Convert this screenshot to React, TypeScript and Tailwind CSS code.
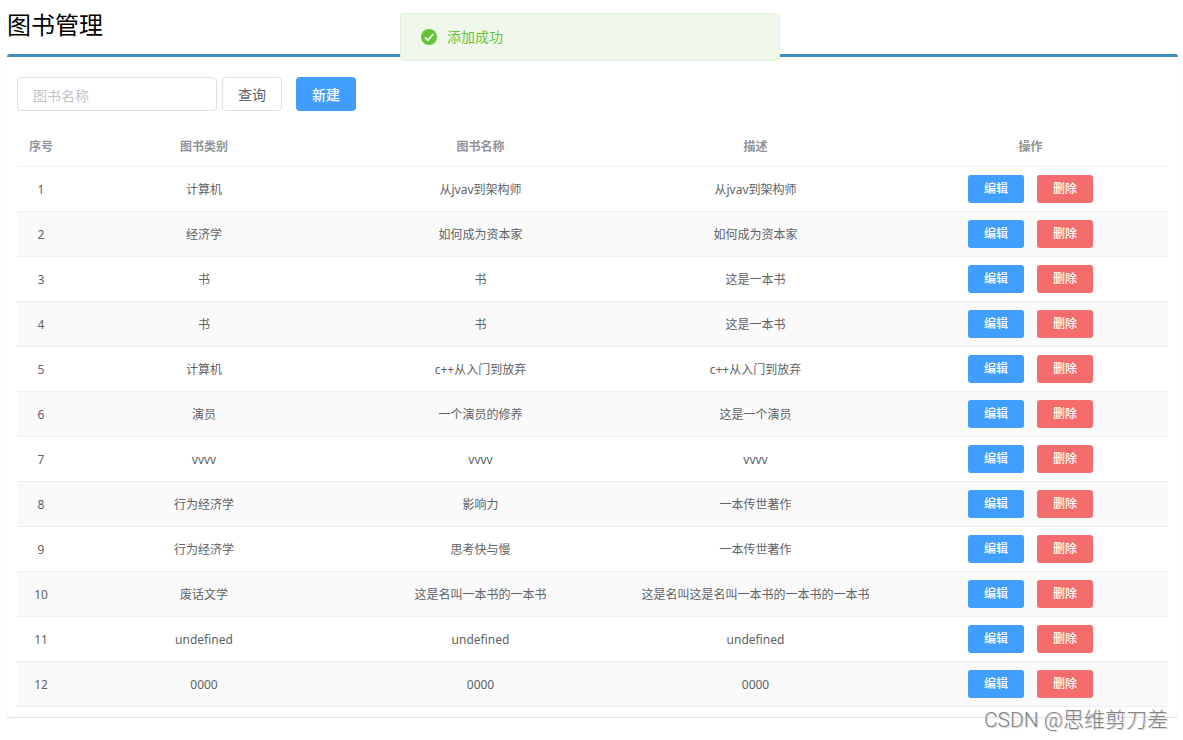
interface Book {
  category: string;
  name: string;
  description: string;
}

const books: Book[] = [
  { category: '计算机', name: '从jvav到架构师', description: '从jvav到架构师' },
  { category: '经济学', name: '如何成为资本家', description: '如何成为资本家' },
  { category: '书', name: '书', description: '这是一本书' },
  { category: '书', name: '书', description: '这是一本书' },
  { category: '计算机', name: 'c++从入门到放弃', description: 'c++从入门到放弃' },
  { category: '演员', name: '一个演员的修养', description: '这是一个演员' },
  { category: 'vvvv', name: 'vvvv', description: 'vvvv' },
  { category: '行为经济学', name: '影响力', description: '一本传世著作' },
  { category: '行为经济学', name: '思考快与慢', description: '一本传世著作' },
  { category: '废话文学', name: '这是名叫一本书的一本书', description: '这是名叫这是名叫一本书的一本书的一本书' },
  { category: 'undefined', name: 'undefined', description: 'undefined' },
  { category: '0000', name: '0000', description: '0000' },
];

function SuccessIcon() {
  return (
    <svg viewBox="0 0 16 16" className="size-4 shrink-0" aria-hidden="true">
      <circle cx="8" cy="8" r="8" fill="#67c23a" />
      <path d="M4 8.3 7 11.2 12.2 5" fill="none" stroke="#f0f9eb" strokeWidth="1.7" />
    </svg>
  );
}

function SuccessMessage({ text }: { text: string }) {
  return (
    <div className="pointer-events-none absolute inset-x-0 top-[13px] flex justify-center pr-[3px]">
      <div
        role="alert"
        className="flex h-12 w-[380px] items-center gap-2.5 rounded border border-[#e1f3d8] bg-[#f0f8ec] px-5 text-sm text-[#67c23a]"
      >
        <SuccessIcon />
        <p>{text}</p>
      </div>
    </div>
  );
}

function BookRow({ book, index }: { book: Book; index: number }) {
  return (
    <tr className="h-[45px] border-b border-[#ebeef5] even:bg-[#fafafa]">
      <td className="pt-0.5">{index}</td>
      <td className="pt-0.5">{book.category}</td>
      <td className="pt-0.5">{book.name}</td>
      <td className="pt-0.5">{book.description}</td>
      <td>
        <div className="flex justify-center gap-[13px] font-medium text-white">
          <button type="button" className="h-7 w-14 rounded-[3px] bg-[#409eff]">
            编辑
          </button>
          <button type="button" className="h-7 w-14 rounded-[3px] bg-[#f56c6c]">
            删除
          </button>
        </div>
      </td>
    </tr>
  );
}

export default function App() {
  return (
    <div className="relative min-h-screen bg-white pr-[5px] pl-[7px] font-['Noto_Sans','Noto_Sans_CJK_SC',sans-serif] text-[#606266]">
      <h1 className="h-[54px] pt-[9px] text-2xl leading-8 text-black">图书管理</h1>

      <main className="rounded-[3px] border-t-[3px] border-[#3c8dbc] bg-white px-2.5 pb-2.5 shadow-[0_1px_1px_rgba(0,0,0,0.12)]">
        <form className="flex items-center pt-5 text-sm" onSubmit={(event) => event.preventDefault()}>
          <input
            type="text"
            aria-label="图书名称"
            placeholder="图书名称"
            className="h-[34px] w-[200px] rounded border border-[#dcdfe6] px-[15px] pt-0.5 outline-none placeholder:text-[#c0c4cc]"
          />
          <button type="submit" className="ml-[5px] h-[34px] w-15 rounded border border-[#dcdfe6] pt-0.5">
            查询
          </button>
          <button type="button" className="ml-3.5 h-[34px] w-15 rounded bg-[#409eff] pt-0.5 font-medium text-white">
            新建
          </button>
        </form>

        <table className="mt-3.5 w-full table-fixed border-collapse text-center text-xs">
          <thead>
            <tr className="h-[41px] border-b border-[#ebeef5] text-[#909399]">
              <th className="w-12 pt-1 font-bold">序号</th>
              <th className="w-[278px] pt-1 font-bold">图书类别</th>
              <th className="pt-1 font-bold">图书名称</th>
              <th className="pt-1 font-bold">描述</th>
              <th className="pt-1 font-bold">操作</th>
            </tr>
          </thead>
          <tbody>
            {books.map((book, i) => (
              <BookRow key={i} book={book} index={i + 1} />
            ))}
          </tbody>
        </table>
      </main>

      <SuccessMessage text="添加成功" />

      <p className="absolute right-[15px] bottom-1 font-['Roboto','Noto_Sans_CJK_SC',sans-serif] text-[21px] leading-8 font-light text-[#858585] [text-shadow:1px_1px_1px_#d0d0d0]">
        CSDN @思维剪刀差
      </p>
    </div>
  );
}
